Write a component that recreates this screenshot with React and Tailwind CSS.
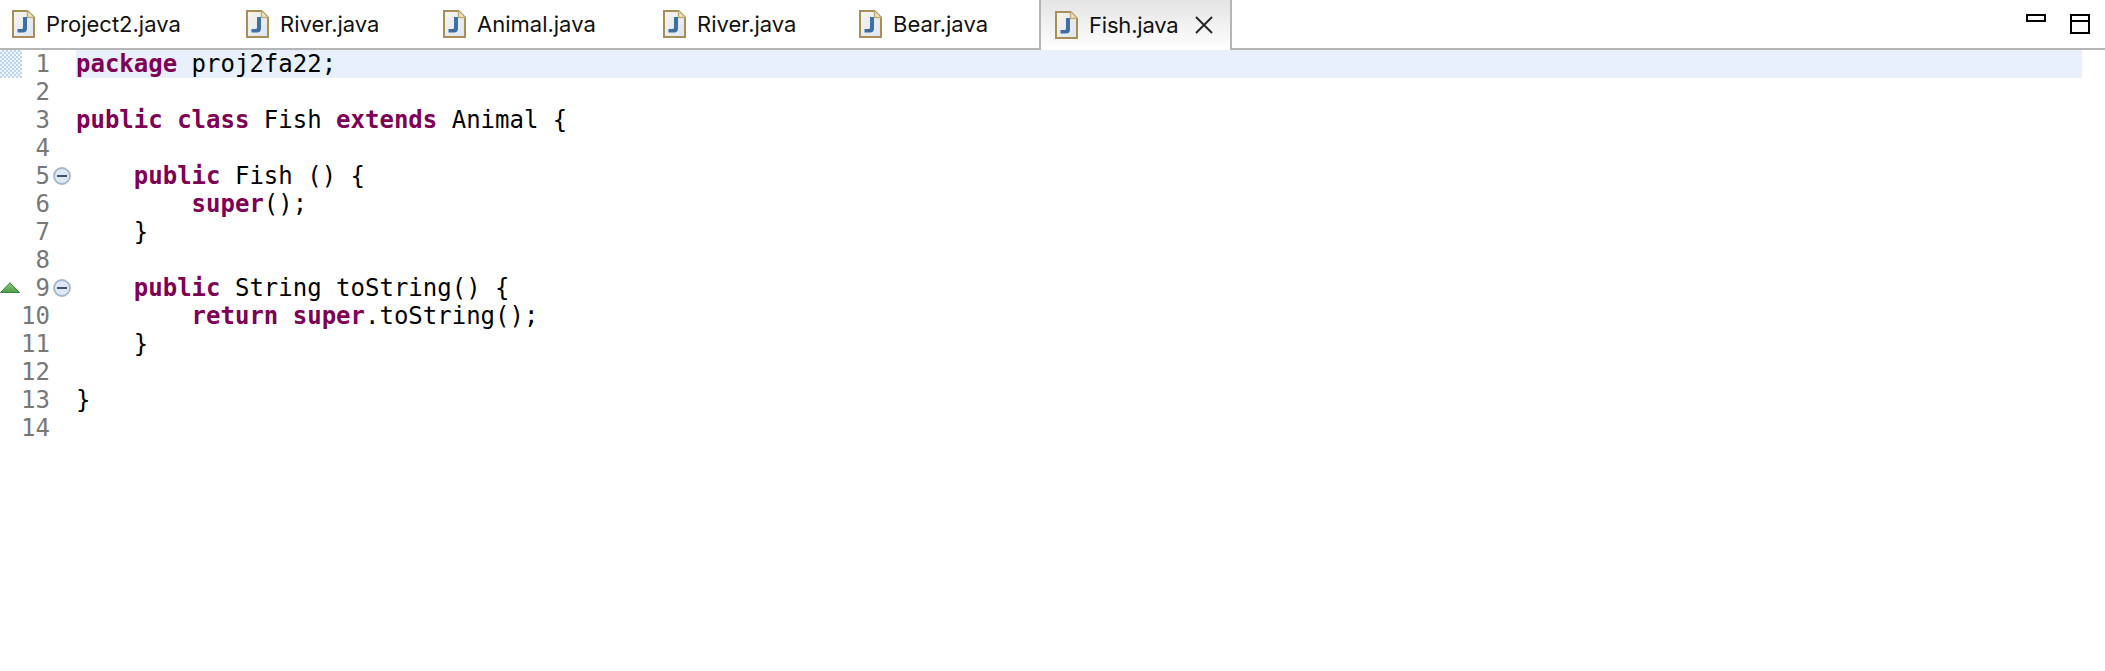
const mono = "font-['DejaVu_Sans_Mono','Liberation_Mono',monospace]";

function JavaIcon() {
  return (
    <svg width="23" height="28" viewBox="0 0 23 28" className="shrink-0">
      <defs>
        <linearGradient id="jf" x1="0" y1="0" x2="1" y2="1">
          <stop offset="0" stopColor="#f7f5ec" />
          <stop offset="1" stopColor="#dbe5f2" />
        </linearGradient>
      </defs>
      <path d="M1 1H15.5L22 7.5V27H1Z" fill="url(#jf)" stroke="#a98f55" strokeWidth="2" />
      <path d="M15.5 1V7.5H22" fill="#efe3c2" stroke="#c2ab74" strokeWidth="1.5" />
      <path d="M15 7V18.5Q15 22.5 11 22.5H5.5V19H9.5Q11 19 11 17.5V7Z" fill="#3f6da5" />
    </svg>
  );
}

function Tab({ name, width }) {
  return (
    <div className={`flex items-center pl-3 gap-[11px] h-full ${width}`}>
      <JavaIcon />
      <span className="text-[22px] text-[#111]">{name}</span>
    </div>
  );
}

function FoldIcon() {
  return (
    <svg width="18" height="18" viewBox="0 0 18 18" className="-mt-[1px]">
      <circle cx="9" cy="9" r="8" fill="#dfe7f2" stroke="#a3b6cf" strokeWidth="1.8" />
      <rect x="4" y="8" width="10" height="2" fill="#3d5470" />
    </svg>
  );
}

function Triangle() {
  return (
    <svg width="20" height="11" viewBox="0 0 20 11" className="-mt-[2px]">
      <defs>
        <linearGradient id="tg" x1="0" y1="0" x2="0" y2="1">
          <stop offset="0" stopColor="#8cc878" />
          <stop offset="1" stopColor="#4f9e45" />
        </linearGradient>
      </defs>
      <path d="M0.5 10.5L10 0.8L19.5 10.5Z" fill="url(#tg)" stroke="#37843a" strokeWidth="1" />
    </svg>
  );
}

const K = ({ children }) => <span className="font-bold text-[#7f0055]">{children}</span>;

const lines = [
  { code: <><K>package</K> proj2fa22;</>, current: true },
  { code: null },
  { code: <><K>public</K> <K>class</K> Fish <K>extends</K> Animal {"{"}</> },
  { code: null },
  { code: <>{"    "}<K>public</K> Fish () {"{"}</>, fold: true },
  { code: <>{"        "}<K>super</K>();</> },
  { code: <>{"    }"}</> },
  { code: null },
  { code: <>{"    "}<K>public</K> String toString() {"{"}</>, fold: true, override: true },
  { code: <>{"        "}<K>return</K> <K>super</K>.toString();</> },
  { code: <>{"    }"}</> },
  { code: null },
  { code: <>{"}"}</> },
  { code: null },
];

export default function App() {
  return (
    <div className="w-[2105px] h-[671px] bg-white overflow-hidden font-['Inter','Liberation_Sans',sans-serif]">
      <div className="flex h-[50px] border-b-2 border-[#b5b5b5]">
        <Tab name="Project2.java" width="w-[234px]" />
        <Tab name="River.java" width="w-[197px]" />
        <Tab name="Animal.java" width="w-[220px]" />
        <Tab name="River.java" width="w-[196px]" />
        <Tab name="Bear.java" width="w-[192px]" />
        <div className="flex items-center pl-[14px] gap-[11px] w-[193px] h-[50px] -mb-[2px] border-x-2 border-[#b5b5b5] bg-gradient-to-b from-[#e4e4e4] to-white">
          <JavaIcon />
          <span className="text-[22px] tracking-[-0.2px] text-[#111]">Fish.java</span>
          <svg width="18" height="18" viewBox="0 0 18 18" className="ml-[6px]">
            <path d="M1 1L17 17M17 1L1 17" stroke="#222" strokeWidth="1.8" />
          </svg>
        </div>
        <div className="flex-1 flex justify-end items-start gap-6 pt-[14px] pr-[15px]">
          <div className="w-5 h-2 border-2 border-black" />
          <div className="w-5 h-5 border-2 border-black">
            <div className="h-1 border-b-2 border-black box-content" />
          </div>
        </div>
      </div>
      <div className={`${mono} text-[24px] leading-[28px] text-black`}>
        {lines.map((l, i) => (
          <div key={i} className="flex h-7">
            <div className="w-[22px] shrink-0 flex items-center">
              {l.current && <div className="w-full h-full bg-[repeating-conic-gradient(#bcd4f4_0_25%,#f3f7fd_0_50%)] bg-[length:4px_4px]" />}
              {l.override && <Triangle />}
            </div>
            <div className="w-[28px] shrink-0 text-right text-[#787878] whitespace-nowrap flex justify-end">{i + 1}</div>
            <div className="w-[26px] shrink-0 flex items-center pl-[3px]">{l.fold && <FoldIcon />}</div>
            <div className={`w-[2006px] shrink-0 whitespace-pre ${l.current ? "bg-[#e8f0fb]" : ""}`}>{l.code}</div>
          </div>
        ))}
      </div>
    </div>
  );
}
